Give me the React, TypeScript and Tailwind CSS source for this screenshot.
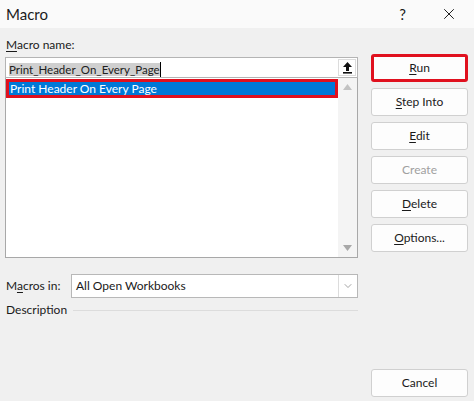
import { ChevronDown, X } from "lucide-react";

type ButtonProps = {
  label: string;
  hotkey: number;
  disabled?: boolean;
  highlighted?: boolean;
};

function DialogButton({ label, hotkey, disabled, highlighted }: ButtonProps) {
  const before = label.slice(0, hotkey);
  const key = label.slice(hotkey, hotkey + 1);
  const after = label.slice(hotkey + 1);

  return (
    <div
      className={`flex h-[28px] w-[97px] items-center justify-center rounded-[3px] bg-[#fdfdfd] text-[12px] ${
        highlighted
          ? "border-[3px] border-[#e0101e]"
          : "border border-[#d0d0d0]"
      } ${disabled ? "text-[#a0a0a0]" : "text-[#1a1a1a]"}`}
    >
      {hotkey < 0 ? (
        label
      ) : (
        <span>
          {before}
          <span className="underline underline-offset-2">{key}</span>
          {after}
        </span>
      )}
    </div>
  );
}

export default function App() {
  return (
    <div
      className="flex h-[401px] w-[474px] flex-col overflow-hidden bg-[#f0f0f0] text-[#1a1a1a]"
      style={{ fontFamily: 'Lato, "Noto Sans", sans-serif' }}
    >
      <div className="flex h-[28px] items-center justify-between bg-[#fafafa] pl-[6px] pr-[16px]">
        <span className="text-[15px]">Macro</span>
        <div className="flex items-center gap-[34px]">
          <span className="text-[15px]">?</span>
          <X size={18} strokeWidth={1.3} />
        </div>
      </div>

      <div className="flex flex-1 gap-[13px] pl-[5px] pr-[6px]">
        <div className="flex w-[353px] flex-col">
          <div className="mt-[8px] pl-[1px] text-[12px] leading-[18px]">
            <span className="underline underline-offset-2">M</span>acro name:
          </div>

          <div className="mt-[3px] flex h-[21px] items-center border border-[#b4b4b4] bg-white pl-[3px] pr-[1px]">
            <span className="flex-1">
              <span className="bg-[#cfcfcf] text-[11.5px] leading-[16px] text-[#202020]">
                Print_Header_On_Every_Page
              </span>
              <span className="inline-block h-[15px] w-px translate-y-[3px] bg-black" />
            </span>
            <span className="flex h-[17px] w-[18px] items-center justify-center border border-[#dcdcdc] bg-white">
              <svg width="11" height="13" viewBox="0 0 11 13">
                <path d="M5.5 1 L10 6 H7 V10 H4 V6 H1 Z" fill="#111" />
                <rect x="1" y="11" width="9" height="1.6" fill="#111" />
              </svg>
            </span>
          </div>

          <div className="flex h-[180px] border-x border-b border-[#a8a8a8] bg-white">
            <div className="flex-1 pt-px">
              <div className="flex h-[19px] items-center border-[3px] border-[#e0101e] bg-[#0078d7] pl-[1px] text-[12px] text-white">
                Print Header On Every Page
              </div>
            </div>
            <div className="flex w-[19px] flex-col items-center justify-between bg-[#f4f4f4] py-[6px]">
              <svg width="9" height="6" viewBox="0 0 9 6">
                <path d="M4.5 0 L9 6 H0 Z" fill="#c2c2c2" />
              </svg>
              <svg width="9" height="6" viewBox="0 0 9 6">
                <path d="M0 0 H9 L4.5 6 Z" fill="#a8a8a8" />
              </svg>
            </div>
          </div>

          <div className="mt-[16px] flex items-center">
            <span className="w-[66px] pl-[1px] text-[12px]">
              M<span className="underline underline-offset-2">a</span>cros in:
            </span>
            <div className="flex h-[24px] flex-1 items-center border border-[#b8b8b8] bg-white">
              <span className="flex-1 pl-[4px] text-[12px]">All Open Workbooks</span>
              <span className="flex h-full w-[19px] items-center justify-center border-l border-[#dcdcdc]">
                <ChevronDown size={12} strokeWidth={1.2} color="#666" />
              </span>
            </div>
          </div>

          <div className="mt-[3px] flex items-center gap-[6px]">
            <span className="pl-[1px] text-[12px]">Description</span>
            <span className="h-px flex-1 bg-[#dcdcdc]" />
          </div>
        </div>

        <div className="flex flex-1 flex-col pt-[26px] pb-[4px]">
          <div className="flex flex-col gap-[6px]">
            <DialogButton label="Run" hotkey={0} highlighted />
            <DialogButton label="Step Into" hotkey={0} />
            <DialogButton label="Edit" hotkey={0} />
            <DialogButton label="Create" hotkey={-1} disabled />
            <DialogButton label="Delete" hotkey={0} />
            <DialogButton label="Options..." hotkey={0} />
          </div>
          <div className="mt-auto">
            <DialogButton label="Cancel" hotkey={-1} />
          </div>
        </div>
      </div>
    </div>
  );
}
